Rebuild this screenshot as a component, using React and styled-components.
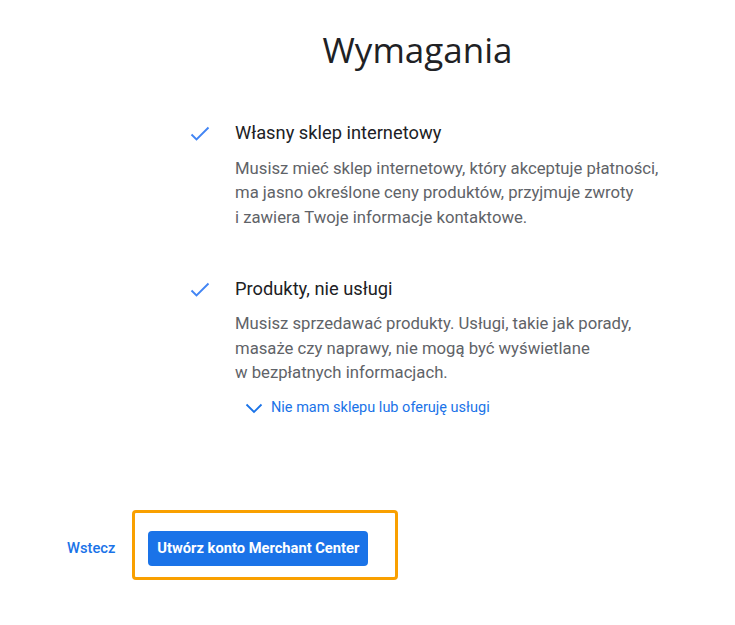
import React from 'react';
import styled, { createGlobalStyle } from 'styled-components';

const Global = createGlobalStyle`
  body {
    margin: 0;
    background: #ffffff;
    font-family: Roboto, "Liberation Sans", sans-serif;
  }
`;

const Page = styled.div`
  width: 735px;
  height: 625px;
  display: flex;
  flex-direction: column;
`;

const Title = styled.h1`
  margin: 28px 0 0 0;
  text-align: center;
  padding-left: 100px;
  font-family: "Open Sans", Roboto, sans-serif;
  font-weight: 400;
  font-size: 35px;
  line-height: 44px;
  color: #202124;
`;

const List = styled.div`
  display: flex;
  flex-direction: column;
  gap: 45.5px;
  padding-left: 189px;
  margin-top: 48px;
`;

const Item = styled.div`
  display: grid;
  grid-template-columns: 46px 1fr;
`;

const Check = styled.svg`
  width: 22px;
  height: 22px;
  margin-top: 2px;
`;

const Heading = styled.div`
  font-size: 18.3px;
  line-height: 25px;
  color: #202124;
`;

const Body = styled.p`
  margin: 11.5px 0 0 0;
  font-size: 16.7px;
  line-height: 24.5px;
  color: #5f6368;
`;

const MoreLink = styled.a`
  display: flex;
  align-items: center;
  gap: 8px;
  margin: 13px 0 0 10px;
  font-size: 14.5px;
  color: #1a73e8;
  text-decoration: none;
`;

const Footer = styled.div`
  display: flex;
  align-items: baseline;
  padding-left: 67px;
  margin-top: 93px;
  gap: 17px;
`;

const BackLink = styled.a`
  font-size: 14.7px;
  font-weight: 500;
  color: #1a73e8;
  text-decoration: none;
`;

const Highlight = styled.div`
  padding: 18px 27px 11px 13px;
  border: 3px solid #f9a000;
  border-radius: 4px;
`;

const Primary = styled.button`
  height: 35px;
  padding: 0 9px;
  border: none;
  border-radius: 4px;
  background: #1a73e8;
  color: #ffffff;
  font-family: Roboto, "Liberation Sans", sans-serif;
  font-size: 14.7px;
  font-weight: 700;
  cursor: pointer;
`;

const CheckIcon = () => (
  <Check viewBox="0 0 22 22" fill="none" stroke="#4285f4" strokeWidth="1.9">
    <path d="M2.5 12.5 7.5 17.5 19.5 5.5" />
  </Check>
);

const Chevron = () => (
  <svg width="18" height="18" viewBox="0 0 18 18" fill="none" stroke="#1a73e8" strokeWidth="1.8">
    <path d="M1.5 5.5 9 13 16.5 5.5" />
  </svg>
);

const items = [
  {
    title: 'Własny sklep internetowy',
    lines: [
      'Musisz mieć sklep internetowy, który akceptuje płatności,',
      'ma jasno określone ceny produktów, przyjmuje zwroty',
      'i zawiera Twoje informacje kontaktowe.',
    ],
  },
  {
    title: 'Produkty, nie usługi',
    lines: [
      'Musisz sprzedawać produkty. Usługi, takie jak porady,',
      'masaże czy naprawy, nie mogą być wyświetlane',
      'w bezpłatnych informacjach.',
    ],
    link: 'Nie mam sklepu lub oferuję usługi',
  },
];

const App = () => (
  <Page>
    <Global />
    <Title>Wymagania</Title>
    <List>
      {items.map(item => (
        <Item key={item.title}>
          <CheckIcon />
          <div>
            <Heading>{item.title}</Heading>
            <Body>
              {item.lines.map((l, i) => (
                <React.Fragment key={i}>
                  {l}
                  {i < item.lines.length - 1 && <br />}
                </React.Fragment>
              ))}
            </Body>
            {item.link && (
              <MoreLink href="#">
                <Chevron />
                {item.link}
              </MoreLink>
            )}
          </div>
        </Item>
      ))}
    </List>
    <Footer>
      <BackLink href="#">Wstecz</BackLink>
      <Highlight>
        <Primary>Utwórz konto Merchant Center</Primary>
      </Highlight>
    </Footer>
  </Page>
);

export default App;
